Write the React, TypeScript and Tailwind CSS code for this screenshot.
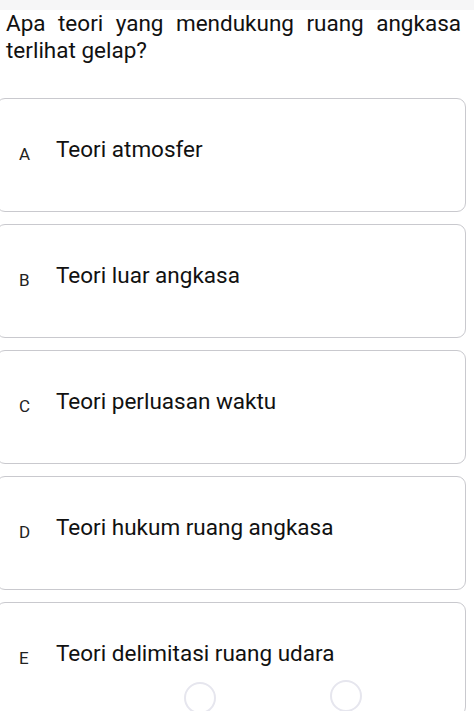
import React from "react";

const options = [
  { l: "A", t: "Teori atmosfer" },
  { l: "B", t: "Teori luar angkasa" },
  { l: "C", t: "Teori perluasan waktu" },
  { l: "D", t: "Teori hukum ruang angkasa" },
  { l: "E", t: "Teori delimitasi ruang udara" },
];

export default function App() {
  return (
    <div
      className="w-[474px] h-[711px] overflow-hidden bg-white text-[#151515]"
      style={{ fontFamily: "Roboto, 'Noto Sans', sans-serif" }}
    >
      <div className="h-[10px] bg-[#f6f6f7]" />
      <p className="pl-[6px] pr-[13px] text-[22.5px] leading-[27px] text-justify text-[#111]">
        Apa teori yang mendukung ruang angkasa terlihat gelap?
      </p>
      <div className="mt-[34px] flex flex-col gap-[12px] ml-[-4px] w-[470px]">
        {options.map((o, i) => (
          <div
            key={o.l}
            className="relative h-[114px] rounded-[9px] border-[1.5px] border-[#c9c9ce] flex items-center"
          >
            <span className="w-[59px] pl-[22px] text-[17px] text-[#222]">{o.l}</span>
            <span className="text-[22.5px] mb-[11px] text-[#111]">{o.t}</span>
            {i === 4 && (
              <>
                <span className="absolute left-[187px] top-[79px] w-[32px] h-[32px] rounded-full border-[2px] border-[#e6e6ee]" />
                <span className="absolute left-[333px] top-[77px] w-[32px] h-[32px] rounded-full border-[2px] border-[#e6e6ee]" />
              </>
            )}
          </div>
        ))}
      </div>
    </div>
  );
}
